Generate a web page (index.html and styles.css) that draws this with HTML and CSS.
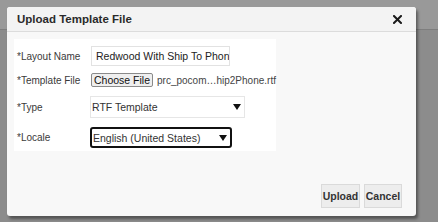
FILE: index.html
```html
<!DOCTYPE html>
<html>
<head>
<meta charset="utf-8">
<link rel="stylesheet" href="styles.css">
</head>
<body>
<div class="backdrop">
  <div class="page-strip"></div>
  <div class="dialog">
    <div class="header">
      <span class="title">Upload Template File</span>
      <svg class="close" width="9" height="9" viewBox="0 0 9 9" aria-label="Close"><path d="M1 1 L8 8 M8 1 L1 8" stroke="#1a1a1a" stroke-width="2" stroke-linecap="square"/></svg>
    </div>
    <div class="body">
      <div class="panel">
        <div class="row row-name">
          <span class="label">*Layout Name</span>
          <div class="textbox">Redwood With Ship To Phone</div>
        </div>
        <div class="row row-file">
          <span class="label">*Template File</span>
          <span class="choose">Choose File</span>
          <span class="filename">prc_pocom…hip2Phone.rtf</span>
        </div>
        <div class="row row-type">
          <span class="label">*Type</span>
          <div class="select select-type"><span>RTF Template</span><span class="arrow"></span></div>
        </div>
        <div class="row row-locale">
          <span class="label">*Locale</span>
          <div class="select select-locale"><span>English (United States)</span><span class="arrow"></span></div>
        </div>
      </div>
    </div>
    <div class="footer">
      <span class="btn btn-upload">Upload</span>
      <span class="btn btn-cancel">Cancel</span>
    </div>
  </div>
</div>
</body>
</html>
```
FILE: styles.css
```css
html, body {
  margin: 0;
  padding: 0;
}
body {
  width: 438px;
  height: 222px;
  overflow: hidden;
  background: #8c8c8c;
  font-family: "Liberation Sans", Arial, sans-serif;
}
.backdrop {
  position: relative;
  width: 438px;
  height: 222px;
  padding: 7px 0 0 7px;
  box-sizing: border-box;
}
.page-strip {
  position: absolute;
  left: 0;
  top: 0;
  width: 438px;
  height: 29px;
  background: #999;
  border-bottom: 1px solid #7e7e7e;
}
.dialog {
  position: relative;
  width: 409px;
  height: 209px;
  background: #f8f8f8;
  border-radius: 3px;
  box-shadow: 2px 3px 3px rgba(0, 0, 0, 0.4);
  display: flex;
  flex-direction: column;
}
.header {
  height: 24px;
  background: #f3f3f3;
  border-bottom: 1px solid #dcdcdc;
  border-radius: 3px 3px 0 0;
  display: flex;
  align-items: center;
  justify-content: space-between;
  padding: 0 14px 0 10px;
}
.title {
  font-size: 11.5px;
  font-weight: bold;
  color: #2a2a2a;
}
.close {
  display: block;
}
.body {
  padding: 7px 0 0 7px;
  flex: 1;
}
.panel {
  width: 262px;
  height: 112px;
  background: #fff;
  box-sizing: border-box;
  padding: 7px 0 0 3px;
  display: flex;
  flex-direction: column;
}
.row {
  display: flex;
  align-items: center;
  font-size: 10.5px;
  color: #333;
}
.label {
  width: 74px;
  flex: none;
  font-size: 10px;
  color: #3a3a3a;
}
.row-name { height: 20px; }
.row-file { height: 14px; margin-top: 7px; }
.row-type { height: 22px; margin-top: 9px; }
.row-locale { height: 21px; margin-top: 9px; }
.textbox {
  width: 139px;
  height: 20px;
  box-sizing: border-box;
  border: 1px solid #e2e2e2;
  padding: 0 4px;
  line-height: 18px;
  white-space: nowrap;
  overflow: hidden;
  color: #222;
}
.choose {
  height: 14px;
  width: 62px;
  box-sizing: border-box;
  border: 1px solid #8a8a8a;
  border-radius: 2px;
  background: #efefef;
  color: #111;
  font-size: 10.5px;
  line-height: 12px;
  text-align: center;
}
.filename {
  margin-left: 4px;
  color: #444;
  font-size: 10px;
}
.select {
  box-sizing: border-box;
  display: flex;
  align-items: center;
  justify-content: space-between;
  padding: 0 3px 0 1px;
  color: #333;
}
.select-type {
  margin-left: -1px;
  width: 155px;
  height: 22px;
  border: 1px solid #e6e6e6;
}
.select-locale {
  margin-left: -1px;
  width: 142px;
  height: 21px;
  border: 2px solid #111;
  border-radius: 3px;
}
.arrow {
  width: 0;
  height: 0;
  border-left: 4px solid transparent;
  border-right: 4px solid transparent;
  border-top: 6px solid #111;
}
.footer {
  display: flex;
  justify-content: flex-end;
  gap: 4px;
  padding: 0 14px 8px 0;
}
.btn {
  height: 24px;
  box-sizing: border-box;
  border: 1px solid #dadada;
  background: #ededed;
  color: #333;
  font-size: 10.5px;
  font-weight: bold;
  line-height: 22px;
  text-align: center;
}
.btn-upload { width: 39px; }
.btn-cancel { width: 38px; }
```
